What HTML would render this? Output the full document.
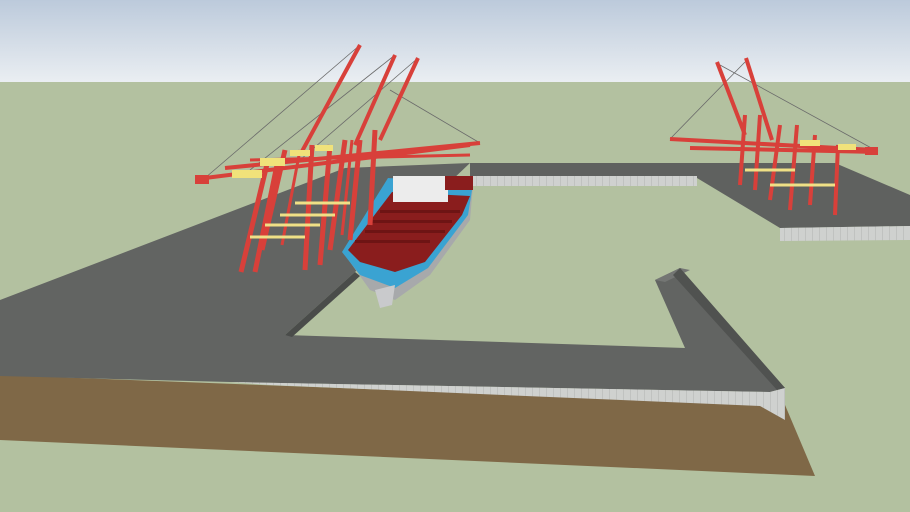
<!DOCTYPE html>
<html><head><meta charset="utf-8"><style>html,body{margin:0;padding:0;width:910px;height:512px;overflow:hidden;background:#b3c1a0}</style></head><body>
<svg width="910" height="512" viewBox="0 0 910 512" xmlns="http://www.w3.org/2000/svg">
<defs>
<linearGradient id="sky" x1="0" y1="0" x2="0" y2="1"><stop offset="0" stop-color="#bccadb"/><stop offset="1" stop-color="#eaeef2"/></linearGradient>
<pattern id="grid" width="7" height="14" patternUnits="userSpaceOnUse"><rect width="7" height="14" fill="#cfd1cf"/><path d="M0 0V14" stroke="#a9aba9" stroke-width="0.8"/></pattern>
</defs>
<rect width="910" height="82" fill="url(#sky)"/>
<rect y="82" width="910" height="430" fill="#b3c1a0"/>
<polygon points="0,375 785,405 815,476 0,440" fill="#7f6847"/>
<polygon points="470,163 835,163 910,195 910,226 780,228 697,178 470,178" fill="#5f615f"/>
<polygon points="470,176 697,176 697,186 470,186" fill="url(#grid)"/>
<polygon points="780,228 910,226 910,240 780,241" fill="url(#grid)"/>
<polygon points="0,300 345,168 470,163 355,272 285,335 685,348 655,280 680,268 785,388 770,392 230,382 0,376" fill="#626462"/>
<polygon points="355,272 285,335 292,337 360,276" fill="#4a4c4a"/>
<polygon points="655,280 680,268 690,270 665,282" fill="#747674"/>
<polygon points="680,268 785,388 777,390 673,275" fill="#505250"/>
<polygon points="230,382 770,392 785,388 785,420 760,406 270,385" fill="url(#grid)"/>
<!-- ship -->
<polygon points="345,255 390,180 473,185 470,220 430,275 395,300 370,290" fill="#a7a9ab"/>
<polygon points="342,252 388,178 473,184 468,215 428,268 395,288 360,275" fill="#3aa3d2"/>
<polygon points="348,250 392,192 470,196 462,215 425,262 395,272 360,262" fill="#8a1d1d"/>
<rect x="393" y="176" width="55" height="26" fill="#ececec"/>
<rect x="445" y="176" width="28" height="14" fill="#8a1d1d"/>
<polygon points="375,290 395,285 392,305 380,308" fill="#c9cacc"/>
<g fill="#6e1414"><rect x="355" y="240" width="75" height="3"/><rect x="365" y="230" width="80" height="3"/><rect x="372" y="220" width="80" height="3"/><rect x="380" y="210" width="80" height="3"/></g>
<!-- wires -->
<g stroke="#6a6a6a" stroke-width="0.8" fill="none">
<line x1="205" y1="178" x2="360" y2="45"/><line x1="250" y1="170" x2="395" y2="55"/><line x1="300" y1="160" x2="418" y2="58"/>
<line x1="390" y1="90" x2="480" y2="143"/><line x1="720" y1="65" x2="875" y2="150"/><line x1="670" y1="139" x2="745" y2="62"/>
</g>
<!-- left cranes -->
<g stroke="#d8403a" stroke-width="5" fill="none">
<line x1="241" y1="272" x2="268" y2="160"/><line x1="255" y1="272" x2="278" y2="160"/>
<line x1="305" y1="270" x2="312" y2="145"/><line x1="320" y1="265" x2="330" y2="145"/>
<line x1="262" y1="250" x2="285" y2="150"/><line x1="330" y1="250" x2="345" y2="140"/>
<line x1="350" y1="240" x2="360" y2="140"/><line x1="370" y1="225" x2="375" y2="130"/>
<line x1="282" y1="245" x2="300" y2="150" stroke-width="3"/><line x1="342" y1="235" x2="352" y2="140" stroke-width="3"/>
<line x1="205" y1="178" x2="470" y2="145" stroke-width="4"/>
<line x1="225" y1="168" x2="480" y2="143" stroke-width="4"/>
<line x1="250" y1="160" x2="470" y2="155" stroke-width="3"/>
<line x1="300" y1="155" x2="360" y2="45" stroke-width="4"/>
<line x1="355" y1="145" x2="395" y2="55" stroke-width="4"/>
<line x1="380" y1="140" x2="418" y2="58" stroke-width="4"/>
</g>
<g fill="#f0e27a"><rect x="232" y="170" width="30" height="8"/><rect x="260" y="158" width="25" height="8"/><rect x="290" y="150" width="20" height="6"/><rect x="315" y="145" width="18" height="6"/></g>
<g stroke="#efe086" stroke-width="3"><line x1="250" y1="237" x2="305" y2="237"/><line x1="265" y1="225" x2="320" y2="225"/><line x1="280" y1="215" x2="335" y2="215"/><line x1="295" y1="203" x2="350" y2="203"/></g>
<rect x="195" y="175" width="14" height="9" fill="#d8403a"/>
<!-- right cranes -->
<g stroke="#d8403a" stroke-width="4" fill="none">
<line x1="670" y1="139" x2="875" y2="150"/><line x1="690" y1="148" x2="878" y2="152"/>
<line x1="740" y1="185" x2="745" y2="115"/><line x1="755" y1="190" x2="760" y2="115"/>
<line x1="770" y1="200" x2="780" y2="125"/><line x1="790" y1="210" x2="797" y2="125"/>
<line x1="810" y1="205" x2="815" y2="135"/><line x1="835" y1="215" x2="838" y2="145"/>
<line x1="717" y1="62" x2="745" y2="135"/><line x1="746" y1="58" x2="772" y2="140"/>
</g>
<g stroke="#efe086" stroke-width="3"><line x1="745" y1="170" x2="795" y2="170"/><line x1="770" y1="185" x2="835" y2="185"/></g>
<g fill="#f0e27a"><rect x="800" y="140" width="20" height="6"/><rect x="838" y="144" width="18" height="6"/></g>
<rect x="865" y="147" width="13" height="8" fill="#d8403a"/>
</svg>
</body></html>
